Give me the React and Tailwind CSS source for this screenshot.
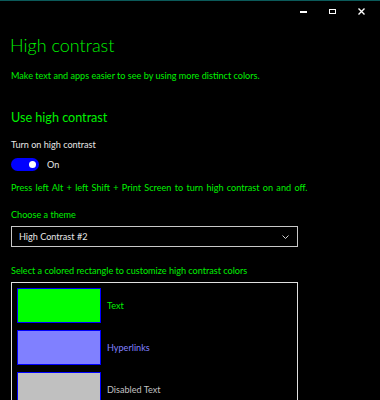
import React from "react";

const body = "text-[9.1px] leading-[12px]";

export default function App() {
  return (
    <div className="w-[380px] h-[400px] bg-black overflow-hidden" style={{ fontFamily: 'Lato, "Noto Sans", sans-serif' }}>
      <div className="h-px bg-[#0b5a5a]" />
      <div className="h-[20px] flex justify-end items-center pr-[4px]">
        <div className="w-[29px] flex justify-center items-center">
          <div className="w-[7px] h-[2px] bg-white mt-[2px]" />
        </div>
        <div className="w-[29px] flex justify-center items-center">
          <div className="w-[7px] h-[5px] border-[1.5px] border-white" />
        </div>
        <div className="w-[29px] flex justify-center items-center">
          <svg width="7" height="7" viewBox="0 0 7 7"><path d="M0.5 0.5L6.5 6.5M6.5 0.5L0.5 6.5" stroke="white" strokeWidth="1.4" /></svg>
        </div>
      </div>
      <div className="px-[11px] flex flex-col">
        <div className="text-[18px] leading-[20px] font-light text-[#00f000] mt-[14px] ml-[-1px]">High contrast</div>
        <div className={`${body} text-[#00f000] mt-[15px]`}>Make text and apps easier to see by using more distinct colors.</div>
        <div className="text-[12.6px] leading-[16px] text-[#00f000] mt-[28px]">Use high contrast</div>
        <div className={`${body} text-[#e6e6e6] mt-[13px]`}>Turn on high contrast</div>
        <div className="flex items-center mt-[7px] gap-[8px]">
          <div className="w-[28px] h-[13px] rounded-full bg-[#0000ff] flex items-center justify-end pr-[3px]">
            <div className="w-[7px] h-[7px] rounded-full bg-white" />
          </div>
          <span className={`${body} text-[#e6e6e6]`}>On</span>
        </div>
        <div className={`${body} text-[#00f000] mt-[11px] [word-spacing:1px]`}>Press left Alt + left Shift + Print Screen to turn high contrast on and off.</div>
        <div className={`${body} text-[#00f000] mt-[15px]`}>Choose a theme</div>
        <div className="w-[287px] h-[21px] border-[1.5px] border-[#c8c8c8] mt-[5px] flex items-center justify-between pl-[7px] pr-[8px]">
          <span className={`${body} text-[#e6e6e6]`}>High Contrast #2</span>
          <svg width="7" height="4" viewBox="0 0 7 4"><path d="M0.5 0.5L3.5 3.5L6.5 0.5" stroke="#d0d0d0" strokeWidth="1" fill="none" /></svg>
        </div>
        <div className={`${body} text-[#00f000] mt-[18px]`}>Select a colored rectangle to customize high contrast colors</div>
        <div className="w-[287px] h-[200px] border-[1.5px] border-[#e0e0e0] mt-[5px] pt-[5px] pl-[5px] flex flex-col gap-[7px]">
          <div className="flex items-center gap-[6px]">
            <div className="w-[84px] h-[35px] bg-[#00ff00] border border-[#0000ff]" />
            <span className={`${body} text-[#00f000]`}>Text</span>
          </div>
          <div className="flex items-center gap-[6px]">
            <div className="w-[84px] h-[35px] bg-[#8080ff] border border-[#0000ff]" />
            <span className={`${body} text-[#8080ff]`}>Hyperlinks</span>
          </div>
          <div className="flex items-center gap-[6px]">
            <div className="w-[84px] h-[35px] bg-[#c0c0c0] border border-[#0000ff]" />
            <span className={`${body} text-[#c0c0c0]`}>Disabled Text</span>
          </div>
        </div>
      </div>
    </div>
  );
}
